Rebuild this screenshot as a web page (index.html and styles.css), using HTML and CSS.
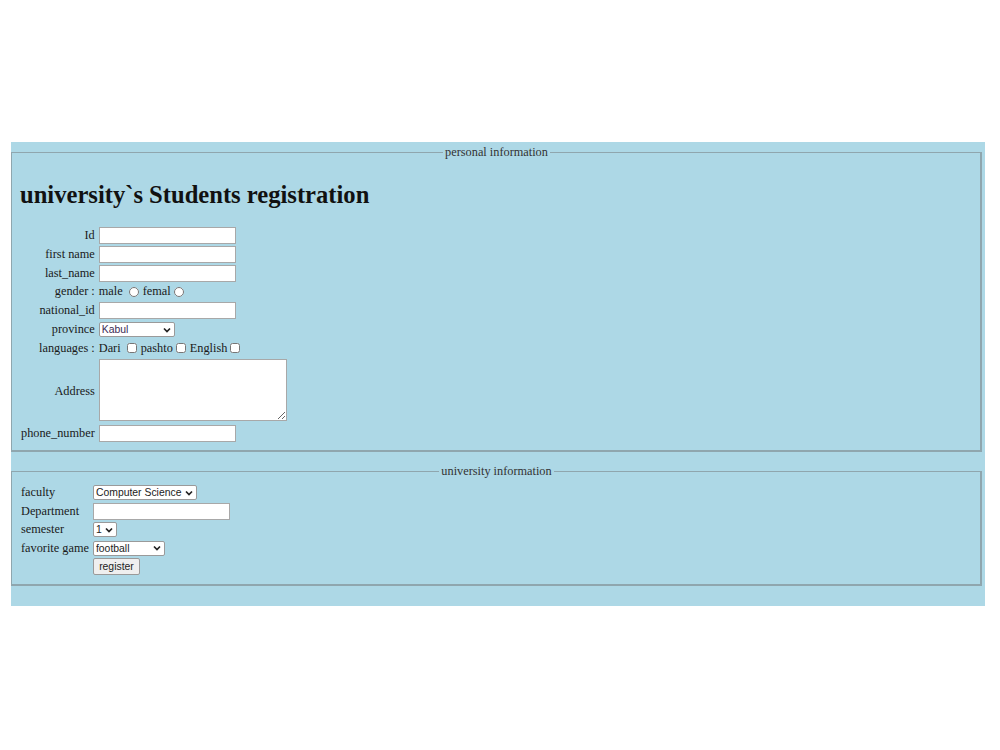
FILE: index.html
```html
<!DOCTYPE html>
<html>
<head>
<meta charset="utf-8">
<title>registration</title>
<link rel="stylesheet" href="styles.css">
</head>
<body>
<div class="page">
  <fieldset class="box box-personal">
    <legend>personal information</legend>
    <h1 class="title">university`s Students registration</h1>
    <div class="grid grid-personal">
      <label class="lbl">Id</label>
      <div class="ctl"><input class="txt" type="text"></div>
      <label class="lbl">first name</label>
      <div class="ctl"><input class="txt" type="text"></div>
      <label class="lbl">last_name</label>
      <div class="ctl"><input class="txt" type="text"></div>
      <label class="lbl">gender :</label>
      <div class="ctl">male <input class="radio" type="radio" name="g"><span class="sp">femal</span> <input class="radio" type="radio" name="g"></div>
      <label class="lbl">national_id</label>
      <div class="ctl"><input class="txt" type="text"></div>
      <label class="lbl">province</label>
      <div class="ctl"><span class="selwrap"><select class="sel sel-province"><option>Kabul</option></select><svg class="chev" viewBox="0 0 8 6" width="8" height="6"><path d="M1 1.5 L4 4.5 L7 1.5" fill="none" stroke="#222" stroke-width="1.7"/></svg></span></div>
      <label class="lbl">languages :</label>
      <div class="ctl">Dari <input class="chk" type="checkbox"><span class="sp">pashto</span> <input class="chk" type="checkbox"><span class="sp">English</span> <input class="chk" type="checkbox"></div>
      <label class="lbl lbl-mid">Address</label>
      <div class="ctl"><textarea class="area"></textarea></div>
      <label class="lbl">phone_number</label>
      <div class="ctl"><input class="txt" type="text"></div>
    </div>
  </fieldset>
  <fieldset class="box box-uni">
    <legend>university information</legend>
    <div class="grid grid-uni">
      <label class="lbl2">faculty</label>
      <div class="ctl"><span class="selwrap"><select class="sel sel-faculty"><option>Computer Science</option></select><svg class="chev" viewBox="0 0 8 6" width="8" height="6"><path d="M1 1.5 L4 4.5 L7 1.5" fill="none" stroke="#222" stroke-width="1.7"/></svg></span></div>
      <label class="lbl2">Department</label>
      <div class="ctl"><input class="txt" type="text"></div>
      <label class="lbl2">semester</label>
      <div class="ctl"><span class="selwrap"><select class="sel sel-sem"><option>1</option></select><svg class="chev" viewBox="0 0 8 6" width="8" height="6"><path d="M1 1.5 L4 4.5 L7 1.5" fill="none" stroke="#222" stroke-width="1.7"/></svg></span></div>
      <label class="lbl2">favorite game</label>
      <div class="ctl"><span class="selwrap"><select class="sel sel-game"><option>football</option></select><svg class="chev" viewBox="0 0 8 6" width="8" height="6"><path d="M1 1.5 L4 4.5 L7 1.5" fill="none" stroke="#222" stroke-width="1.7"/></svg></span></div>
      <span></span>
      <div class="ctl"><button class="btn" type="button">register</button></div>
    </div>
  </fieldset>
</div>
</body>
</html>
```
FILE: styles.css
```css
html, body {
  margin: 0;
  padding: 0;
  background: #ffffff;
}
body {
  font-family: "Liberation Serif", "Times New Roman", serif;
  font-size: 12.3px;
  color: #1a1a1a;
}
.page {
  margin: 142px 0 0 11px;
  width: 974px;
  height: 464px;
  box-sizing: border-box;
  background: #add8e6;
  padding-top: 3px;
}
.box {
  margin: 0 3px 0 0;
  border-color: #8fa6ae;
  border-style: solid;
  border-width: 1px 2px 2px 1px;
  padding: 0 8px 8px 9px;
}
.box legend {
  margin: 0 auto;
  padding: 0 2px;
  font-size: 12.3px;
  line-height: 14px;
  color: #333;
}
.box-uni {
  margin-top: 12px;
  padding-top: 6px;
  padding-bottom: 8px;
}
.title {
  font-size: 24.6px;
  line-height: 28px;
  margin: 22px 0 18px -1px;
  font-weight: bold;
  color: #111;
}
.grid {
  display: grid;
  grid-template-columns: max-content max-content;
  column-gap: 4px;
  row-gap: 1.83px;
  align-items: center;
}
.grid-uni {
  row-gap: 1px;
}
.grid-uni .ctl {
  min-height: 17.5px;
}
.lbl {
  text-align: right;
  white-space: nowrap;
}
.lbl2 {
  text-align: left;
  white-space: nowrap;
}
.ctl {
  display: flex;
  align-items: center;
  min-height: 17px;
  white-space: pre;
}
.sp { margin-left: 4px; }
.txt {
  box-sizing: border-box;
  width: 137px;
  height: 17px;
  margin: 0;
  padding: 1px 2px;
  border: 1px solid #a8a8a8;
  background: #fff;
  font-size: 11px;
}
.area {
  box-sizing: border-box;
  width: 188px;
  height: 62.5px;
  margin: 0 0 2px 0;
  border: 1px solid #a8a8a8;
  background: #fff;
}
.radio, .chk {
  width: 10px;
  height: 10px;
  margin: 0 0 0 3px;
}
.selwrap {
  position: relative;
  display: inline-flex;
}
.chev {
  position: absolute;
  right: 4px;
  top: 50%;
  margin-top: -3px;
  pointer-events: none;
}
.sel {
  -webkit-appearance: none;
  appearance: none;
  box-sizing: border-box;
  height: 15px;
  margin: 0;
  padding: 0 0 0 2px;
  border: 1px solid #9a9a9a;
  border-radius: 2px;
  background: #fff;
  font-family: "Liberation Sans", Arial, sans-serif;
  font-size: 10.4px;
  line-height: 13px;
  color: #222;
}
.sel-province { width: 76px; color: #3a2a55; }
.sel-faculty { width: 104px; }
.sel-sem { width: 24px; }
.sel-game { width: 72px; }
.btn {
  box-sizing: border-box;
  width: 47px;
  height: 17px;
  margin: 0;
  padding: 0;
  border: 1px solid #9a9a9a;
  border-radius: 2px;
  background: #efefef;
  font-family: "Liberation Sans", Arial, sans-serif;
  font-size: 10.4px;
  color: #222;
}
```
